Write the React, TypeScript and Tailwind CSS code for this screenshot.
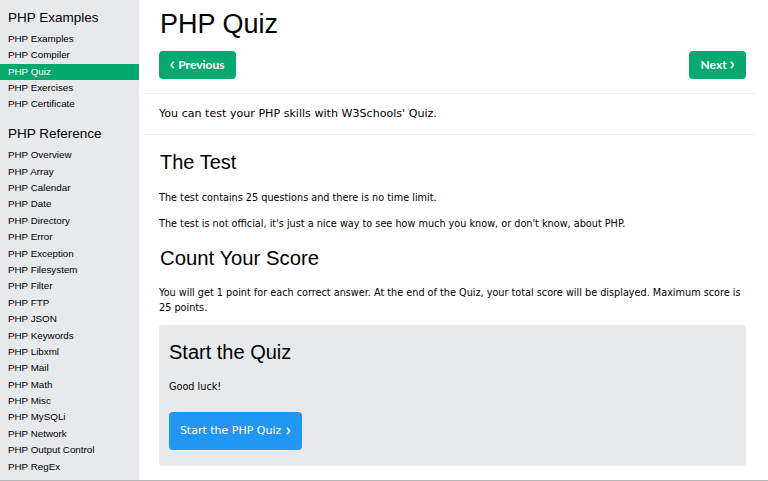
import React from 'react';

const examples = ['PHP Examples', 'PHP Compiler', 'PHP Quiz', 'PHP Exercises', 'PHP Certificate'];

const reference = [
  'PHP Overview',
  'PHP Array',
  'PHP Calendar',
  'PHP Date',
  'PHP Directory',
  'PHP Error',
  'PHP Exception',
  'PHP Filesystem',
  'PHP Filter',
  'PHP FTP',
  'PHP JSON',
  'PHP Keywords',
  'PHP Libxml',
  'PHP Mail',
  'PHP Math',
  'PHP Misc',
  'PHP MySQLi',
  'PHP Network',
  'PHP Output Control',
  'PHP RegEx',
];

const Chevron = ({ dir = 'right', size = 8 }: { dir?: 'left' | 'right'; size?: number }) => (
  <svg width={size * 0.6} height={size} viewBox="0 0 6 10" className="inline-block">
    {dir === 'left' ? (
      <path d="M4.8 1 L1.4 5 L4.8 9" fill="none" stroke="currentColor" strokeWidth="1.9" />
    ) : (
      <path d="M1.2 1 L4.6 5 L1.2 9" fill="none" stroke="currentColor" strokeWidth="1.9" />
    )}
  </svg>
);

const SideItem = ({ label, active }: { label: string; active?: boolean }) => (
  <div
    className={`h-[16.4px] leading-[16.4px] pl-2 text-[9.8px] ${active ? 'bg-[#04AA6D] text-white' : 'text-black'}`}
  >
    {label}
  </div>
);

export default function App() {
  return (
    <div className="flex h-[481px] w-[768px] overflow-hidden border-b border-[#b5b5b5] bg-white font-['Liberation_Sans',Arial,sans-serif]">
      {/* Sidebar */}
      <aside className="w-[139px] shrink-0 bg-[#E7E9EB]">
        <h4 className="mt-[8px] pl-2 text-[13.5px] leading-[20px] text-black">PHP Examples</h4>
        <div className="mt-[2.75px]">
          {examples.map((e) => (
            <SideItem key={e} label={e} active={e === 'PHP Quiz'} />
          ))}
        </div>
        <h4 className="mt-[11.75px] pl-2 text-[13.5px] leading-[20px] text-black">PHP Reference</h4>
        <div className="mt-[2.75px]">
          {reference.map((e) => (
            <SideItem key={e} label={e} />
          ))}
        </div>
      </aside>

      {/* Main */}
      <main className="flex-1 pl-[20px] pr-[22px] text-[#000] font-['DejaVu_Sans',Verdana,sans-serif]">
        <h1 className="mt-[9px] pl-[1px] text-[27px] leading-[30px] font-['Liberation_Sans',Arial,sans-serif]">PHP Quiz</h1>

        <div className="mt-[12px] flex justify-between font-['Lato',sans-serif]">
          <button className="flex h-[28px] w-[77px] items-center justify-center gap-[3px] rounded-[4px] bg-[#04AA6D] text-[12px] font-bold text-white">
            <Chevron dir="left" />
            Previous
          </button>
          <button className="flex h-[28px] w-[57px] items-center justify-center gap-[3px] rounded-[4px] bg-[#04AA6D] text-[12px] font-bold text-white">
            Next
            <Chevron />
          </button>
        </div>

        <hr className="mt-[14px] ml-[-17px] mr-[-9px] border-t border-[#eeeeee]" />

        <p className="mt-[12px] text-[11.1px] leading-[15px]">You can test your PHP skills with W3Schools' Quiz.</p>

        <hr className="mt-[13px] ml-[-17px] mr-[-9px] border-t border-[#eeeeee]" />

        <h2 className="mt-[15px] pl-[1px] text-[20px] leading-[24px] font-['Liberation_Sans',Arial,sans-serif]">The Test</h2>
        <p className="mt-[15.5px] text-[9.7px] leading-[15px]">
          The test contains 25 questions and there is no time limit.
        </p>
        <p className="mt-[11px] text-[9.7px] leading-[15px]">
          The test is not official, it's just a nice way to see how much you know, or don't know, about PHP.
        </p>

        <h2 className="mt-[15.5px] pl-[1px] text-[20.3px] leading-[24px] font-['Liberation_Sans',Arial,sans-serif]">
          Count Your Score
        </h2>
        <p className="mt-[15px] text-[9.7px] leading-[15px]">
          You will get 1 point for each correct answer. At the end of the Quiz, your total score will be displayed.
          Maximum score is 25 points.
        </p>

        <div className="mt-[10px] h-[141px] rounded-[4px] bg-[#E7E9EB] px-[10px] pt-[15px]">
          <h3 className="text-[20px] leading-[24px] font-['Liberation_Sans',Arial,sans-serif]">Start the Quiz</h3>
          <p className="mt-[14.5px] text-[9.7px] leading-[15px]">Good luck!</p>
          <button className="mt-[18.5px] flex h-[38px] w-[133px] items-center justify-center gap-[5px] rounded-[4px] bg-[#2196F3] text-[11px] text-white">
            Start the PHP Quiz
            <Chevron />
          </button>
        </div>
      </main>
    </div>
  );
}
